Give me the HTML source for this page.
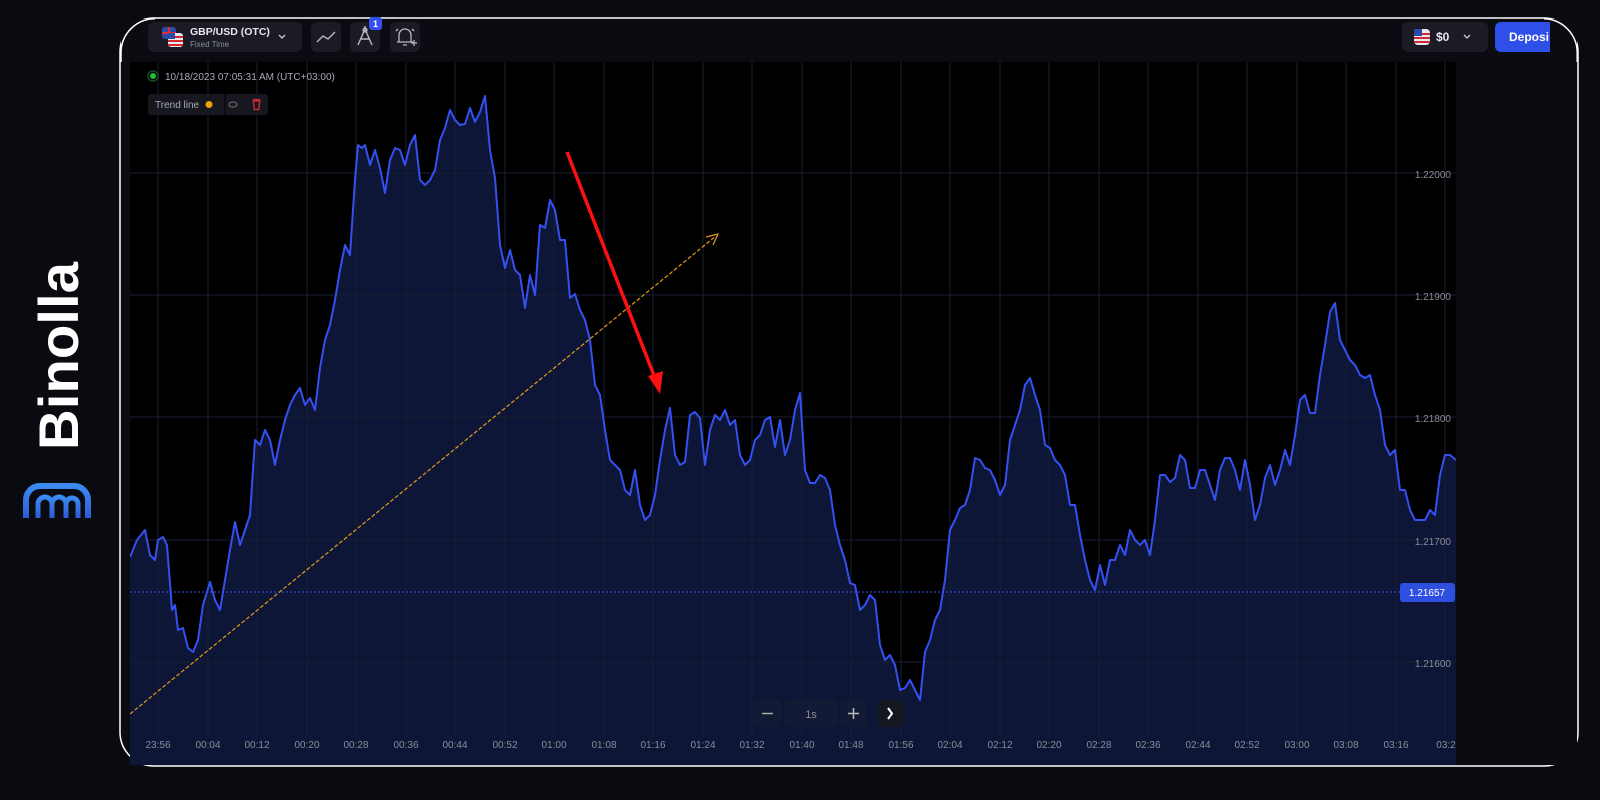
<!DOCTYPE html>
<html><head><meta charset="utf-8"><style>
html,body{margin:0;padding:0;width:1600px;height:800px;background:#0a0b10;overflow:hidden;font-family:"Liberation Sans",sans-serif}
</style></head><body>
<svg width="1600" height="800" viewBox="0 0 1600 800" xmlns="http://www.w3.org/2000/svg" style="position:absolute;left:0;top:0">
<defs><clipPath id="c"><rect x="130" y="62" width="1326" height="703"/></clipPath>
<linearGradient id="lg" x1="0" y1="1" x2="0" y2="0"><stop offset="0" stop-color="#2e5bd8"/><stop offset="1" stop-color="#3a8af0"/></linearGradient></defs>
<rect x="120" y="18" width="1458" height="748" rx="34" fill="#0b0c12" stroke="#ffffff" stroke-width="1.5"/>
<rect x="130" y="62" width="1326" height="703" fill="#000"/>
<g clip-path="url(#c)">
<polygon fill="#0d1636" points="130,765 130,557 137,540 145,530 150,555 155,560 158,540 163,537 167,545 172,610 175,605 178,630 183,628 188,648 193,652 198,640 203,605 210,582 215,600 220,610 225,580 230,550 235,522 240,545 245,530 250,515 255,440 260,445 265,430 270,440 275,465 280,440 285,420 290,405 295,395 300,388 305,405 310,398 315,410 320,368 325,340 330,325 335,300 340,270 345,245 350,255 355,180 358,145 362,148 365,145 370,165 375,150 380,168 385,193 390,160 395,148 400,150 405,165 410,145 415,135 420,180 425,185 430,180 435,170 440,140 445,128 450,110 455,120 460,125 465,124 470,108 475,122 480,112 485,96 490,150 495,178 500,245 505,268 510,250 515,270 520,275 525,308 530,275 535,295 540,225 545,228 550,200 555,210 560,240 565,240 570,298 575,294 580,310 585,320 590,340 595,385 600,395 605,430 610,460 615,465 620,470 625,490 630,495 635,470 640,505 645,520 650,515 655,495 660,460 665,430 670,408 675,455 680,465 685,462 690,415 695,412 700,418 705,465 710,430 715,415 720,420 725,410 730,425 735,420 740,455 745,465 750,460 755,440 760,435 765,420 770,417 775,447 780,420 785,455 790,440 795,410 800,393 805,470 810,483 815,483 820,475 825,478 830,490 835,525 840,545 845,560 850,583 855,585 860,610 865,605 870,595 875,600 880,645 885,660 890,655 895,665 900,690 905,688 910,680 915,690 920,700 925,652 930,640 935,620 940,610 945,580 950,530 955,520 960,508 965,505 970,490 975,458 980,460 985,468 990,470 995,480 1000,495 1005,485 1010,440 1015,425 1020,410 1025,385 1030,378 1035,395 1040,410 1045,445 1050,448 1055,460 1060,465 1065,475 1070,505 1075,505 1080,535 1085,560 1090,580 1095,590 1100,565 1105,585 1110,560 1115,560 1120,545 1125,555 1130,530 1135,540 1140,545 1145,540 1150,555 1155,520 1160,475 1165,475 1170,482 1175,478 1180,455 1185,460 1190,488 1195,488 1200,470 1205,470 1210,485 1215,500 1220,470 1225,458 1230,458 1235,470 1240,490 1245,460 1250,485 1255,520 1260,505 1265,478 1270,465 1275,485 1280,470 1285,450 1290,465 1295,435 1300,400 1305,395 1310,413 1315,413 1320,375 1325,345 1330,312 1335,303 1340,340 1345,350 1350,360 1355,365 1360,375 1365,378 1370,375 1375,395 1380,410 1385,445 1390,455 1395,450 1400,490 1405,490 1410,510 1415,520 1420,520 1425,520 1430,510 1435,515 1440,475 1445,455 1450,455 1456,460 1456,765"/>
<g stroke="#1a1f33" stroke-width="1">
<line x1="130" y1="173" x2="1456" y2="173"/><line x1="130" y1="295" x2="1456" y2="295"/><line x1="130" y1="417" x2="1456" y2="417"/><line x1="130" y1="540" x2="1456" y2="540"/><line x1="130" y1="662" x2="1456" y2="662"/>
<line x1="158" y1="62" x2="158" y2="737"/><line x1="208" y1="62" x2="208" y2="737"/><line x1="257" y1="62" x2="257" y2="737"/><line x1="307" y1="62" x2="307" y2="737"/><line x1="356" y1="62" x2="356" y2="737"/><line x1="406" y1="62" x2="406" y2="737"/><line x1="455" y1="62" x2="455" y2="737"/><line x1="505" y1="62" x2="505" y2="737"/><line x1="554" y1="62" x2="554" y2="737"/><line x1="604" y1="62" x2="604" y2="737"/><line x1="653" y1="62" x2="653" y2="737"/><line x1="703" y1="62" x2="703" y2="737"/><line x1="752" y1="62" x2="752" y2="737"/><line x1="802" y1="62" x2="802" y2="737"/><line x1="851" y1="62" x2="851" y2="737"/><line x1="901" y1="62" x2="901" y2="737"/><line x1="950" y1="62" x2="950" y2="737"/><line x1="1000" y1="62" x2="1000" y2="737"/><line x1="1049" y1="62" x2="1049" y2="737"/><line x1="1099" y1="62" x2="1099" y2="737"/><line x1="1148" y1="62" x2="1148" y2="737"/><line x1="1198" y1="62" x2="1198" y2="737"/><line x1="1247" y1="62" x2="1247" y2="737"/><line x1="1297" y1="62" x2="1297" y2="737"/><line x1="1346" y1="62" x2="1346" y2="737"/><line x1="1396" y1="62" x2="1396" y2="737"/><line x1="1445" y1="62" x2="1445" y2="737"/>
</g>
<polyline fill="none" stroke="#3550f0" stroke-width="2" stroke-linejoin="round" points="130,557 137,540 145,530 150,555 155,560 158,540 163,537 167,545 172,610 175,605 178,630 183,628 188,648 193,652 198,640 203,605 210,582 215,600 220,610 225,580 230,550 235,522 240,545 245,530 250,515 255,440 260,445 265,430 270,440 275,465 280,440 285,420 290,405 295,395 300,388 305,405 310,398 315,410 320,368 325,340 330,325 335,300 340,270 345,245 350,255 355,180 358,145 362,148 365,145 370,165 375,150 380,168 385,193 390,160 395,148 400,150 405,165 410,145 415,135 420,180 425,185 430,180 435,170 440,140 445,128 450,110 455,120 460,125 465,124 470,108 475,122 480,112 485,96 490,150 495,178 500,245 505,268 510,250 515,270 520,275 525,308 530,275 535,295 540,225 545,228 550,200 555,210 560,240 565,240 570,298 575,294 580,310 585,320 590,340 595,385 600,395 605,430 610,460 615,465 620,470 625,490 630,495 635,470 640,505 645,520 650,515 655,495 660,460 665,430 670,408 675,455 680,465 685,462 690,415 695,412 700,418 705,465 710,430 715,415 720,420 725,410 730,425 735,420 740,455 745,465 750,460 755,440 760,435 765,420 770,417 775,447 780,420 785,455 790,440 795,410 800,393 805,470 810,483 815,483 820,475 825,478 830,490 835,525 840,545 845,560 850,583 855,585 860,610 865,605 870,595 875,600 880,645 885,660 890,655 895,665 900,690 905,688 910,680 915,690 920,700 925,652 930,640 935,620 940,610 945,580 950,530 955,520 960,508 965,505 970,490 975,458 980,460 985,468 990,470 995,480 1000,495 1005,485 1010,440 1015,425 1020,410 1025,385 1030,378 1035,395 1040,410 1045,445 1050,448 1055,460 1060,465 1065,475 1070,505 1075,505 1080,535 1085,560 1090,580 1095,590 1100,565 1105,585 1110,560 1115,560 1120,545 1125,555 1130,530 1135,540 1140,545 1145,540 1150,555 1155,520 1160,475 1165,475 1170,482 1175,478 1180,455 1185,460 1190,488 1195,488 1200,470 1205,470 1210,485 1215,500 1220,470 1225,458 1230,458 1235,470 1240,490 1245,460 1250,485 1255,520 1260,505 1265,478 1270,465 1275,485 1280,470 1285,450 1290,465 1295,435 1300,400 1305,395 1310,413 1315,413 1320,375 1325,345 1330,312 1335,303 1340,340 1345,350 1350,360 1355,365 1360,375 1365,378 1370,375 1375,395 1380,410 1385,445 1390,455 1395,450 1400,490 1405,490 1410,510 1415,520 1420,520 1425,520 1430,510 1435,515 1440,475 1445,455 1450,455 1456,460"/>
<line x1="130" y1="592" x2="1400" y2="592" stroke="#3550f0" stroke-width="1" stroke-dasharray="2,2"/>
<line x1="130" y1="714" x2="716" y2="236" stroke="#e39a1a" stroke-width="1.2" stroke-dasharray="4,2"/>
<polyline points="706,237 718,234 713,245" fill="none" stroke="#e39a1a" stroke-width="1.2"/>
<line x1="567" y1="152" x2="655" y2="378" stroke="#ff1010" stroke-width="3.5"/>
<polygon points="660,394 648,376 663,371" fill="#ff1010"/>
</g>
<rect x="121" y="19" width="1456" height="43" fill="#0b0c12"/>
<path d="M121 62 V52 A34 34 0 0 1 155 18.8" fill="none" stroke="#fff" stroke-width="1.5"/>
<path d="M1544 18.8 A34 34 0 0 1 1577.2 52 V62" fill="none" stroke="#fff" stroke-width="1.5"/>
<rect x="1456" y="62" width="121" height="703" fill="#0b0c12"/>
<rect x="148" y="22" width="154" height="30" rx="6" fill="#1a1b25"/>
<rect x="162" y="27" width="14" height="12" rx="3" fill="#2c4aa6"/><line x1="162" y1="33" x2="176" y2="33" stroke="#e02d3c" stroke-width="2"/><line x1="169" y1="27" x2="169" y2="39" stroke="#e02d3c" stroke-width="2"/>
<rect x="168" y="33" width="15" height="14" rx="3" fill="#e8e8ee"/><rect x="168" y="36" width="15" height="2" fill="#d02a35"/><rect x="168" y="40" width="15" height="2" fill="#d02a35"/><rect x="168" y="44" width="15" height="2" fill="#d02a35"/><rect x="168" y="33" width="7" height="6" fill="#2c4aa6"/>
<text x="190" y="35" font-size="10.5" font-weight="bold" fill="#e6e7ee">GBP/USD (OTC)</text>
<text x="190" y="47" font-size="8" fill="#8a8c98">Fixed Time</text>
<polyline points="279,35 282,38 285,35" fill="none" stroke="#ccc" stroke-width="1.3"/>
<rect x="311" y="22" width="30" height="30" rx="6" fill="#1a1b25"/>
<polyline points="317,42 323,36 328,39 335,32" fill="none" stroke="#bbb" stroke-width="1.4"/>
<rect x="350" y="22" width="30" height="30" rx="6" fill="#1a1b25"/>
<path d="M365 29 L358 45 M365 29 L372 45 M360 39 H370 M365 26 v3" fill="none" stroke="#bbb" stroke-width="1.4"/><circle cx="365" cy="30" r="2" fill="none" stroke="#bbb" stroke-width="1.3"/>
<rect x="369" y="17" width="13" height="13" rx="3" fill="#3550f0"/><text x="375.5" y="27" font-size="9" font-weight="bold" fill="#fff" text-anchor="middle">1</text>
<rect x="390" y="22" width="30" height="30" rx="6" fill="#1a1b25"/>
<path d="M399 42 V35 A6 6 0 0 1 411 35 V42 Z M397 42 H413 M403 45 H407 M396 31 L398 29 M414 31 L412 29" fill="none" stroke="#bbb" stroke-width="1.3"/><path d="M411 43 h6 M414 40 v6" stroke="#bbb" stroke-width="1.3"/>
<rect x="1402" y="22" width="86" height="30" rx="6" fill="#1a1b25"/>
<rect x="1414" y="29" width="16" height="16" rx="4" fill="#e8e8ee"/><rect x="1414" y="33" width="16" height="2" fill="#d02a35"/><rect x="1414" y="37" width="16" height="2" fill="#d02a35"/><rect x="1414" y="41" width="16" height="2" fill="#d02a35"/><rect x="1414" y="29" width="8" height="7" fill="#2c4aa6"/>
<text x="1436" y="41" font-size="12" font-weight="bold" fill="#e6e7ee">$0</text>
<polyline points="1464,35 1467,38 1470,35" fill="none" stroke="#ccc" stroke-width="1.3"/>
<path d="M1501 22 H1550 V52 H1501 A6 6 0 0 1 1495 46 V28 A6 6 0 0 1 1501 22Z" fill="#2f50e8"/>
<text x="1509" y="41" font-size="12" font-weight="bold" fill="#fff">Deposi</text>
<circle cx="153" cy="76" r="3" fill="#1ec23a"/><circle cx="153" cy="76" r="5" fill="none" stroke="#1a4a22" stroke-width="1.5"/>
<text x="165" y="80" font-size="10" fill="#a8aab5">10/18/2023  07:05:31 AM  (UTC+03:00)</text>
<rect x="148" y="94" width="120" height="21" rx="3" fill="#17181f"/>
<line x1="225" y1="94" x2="225" y2="115" stroke="#000" stroke-width="1"/>
<text x="155" y="108" font-size="10" fill="#a8aab5">Trend line</text>
<circle cx="209" cy="104.5" r="3.5" fill="#f4a00b"/>
<ellipse cx="233" cy="104.5" rx="4" ry="2.5" fill="none" stroke="#666" stroke-width="1.2"/>
<path d="M252 101 h9 M254 101 v-1.5 h5 v1.5 M253.5 102 l0.8 7.5 h4.4 l0.8 -7.5" fill="none" stroke="#d9303a" stroke-width="1.3"/>
<g font-size="10" fill="#8a8c98" text-anchor="end">
<text x="1451" y="178">1.22000</text><text x="1451" y="300">1.21900</text><text x="1451" y="422">1.21800</text><text x="1451" y="545">1.21700</text><text x="1451" y="667">1.21600</text>
</g>
<rect x="1400" y="583" width="55" height="19" rx="3" fill="#2f4fe0"/>
<text x="1427" y="596" font-size="10" fill="#fff" text-anchor="middle">1.21657</text>
<g font-size="10" fill="#8a8c98" text-anchor="middle">
<text x="158" y="748">23:56</text><text x="208" y="748">00:04</text><text x="257" y="748">00:12</text><text x="307" y="748">00:20</text><text x="356" y="748">00:28</text><text x="406" y="748">00:36</text><text x="455" y="748">00:44</text><text x="505" y="748">00:52</text><text x="554" y="748">01:00</text><text x="604" y="748">01:08</text><text x="653" y="748">01:16</text><text x="703" y="748">01:24</text><text x="752" y="748">01:32</text><text x="802" y="748">01:40</text><text x="851" y="748">01:48</text><text x="901" y="748">01:56</text><text x="950" y="748">02:04</text><text x="1000" y="748">02:12</text><text x="1049" y="748">02:20</text><text x="1099" y="748">02:28</text><text x="1148" y="748">02:36</text><text x="1198" y="748">02:44</text><text x="1247" y="748">02:52</text><text x="1297" y="748">03:00</text><text x="1346" y="748">03:08</text><text x="1396" y="748">03:16</text><text x="1446" y="748">03:2</text>
</g>
<rect x="1456" y="735" width="20" height="20" fill="#0b0c12"/>
<rect x="754" y="700" width="27" height="27" rx="4" fill="#131a35"/>
<rect x="784" y="700" width="54" height="27" rx="4" fill="#131a35"/>
<rect x="840" y="700" width="27" height="27" rx="4" fill="#131a35"/>
<rect x="878" y="700" width="26" height="27" rx="5" fill="#15171f"/>
<line x1="762" y1="713.5" x2="773" y2="713.5" stroke="#aaa" stroke-width="1.5"/>
<text x="811" y="718" font-size="11" fill="#8a8c98" text-anchor="middle">1s</text>
<path d="M848 713.5 h11 M853.5 708 v11" stroke="#bbb" stroke-width="1.5"/>
<polyline points="888,708 892,713.5 888,719" fill="none" stroke="#fff" stroke-width="2"/>
<text transform="translate(78,356) rotate(-90)" font-size="56" font-weight="bold" fill="#ffffff" text-anchor="middle" textLength="188" lengthAdjust="spacingAndGlyphs" font-family="Liberation Sans, sans-serif">Binolla</text>
<path d="M26 518 V500 A14 14 0 0 1 40 486 H74 A14 14 0 0 1 88 500 V518" fill="none" stroke="url(#lg)" stroke-width="6"/>
<path d="M38 518 V504 A7 7 0 0 1 52 504 V518 M52 504 A7 7 0 0 1 66 504 V518 M66 504 A6 6 0 0 1 78 504 V518" fill="none" stroke="url(#lg)" stroke-width="5"/>
</svg>
</body></html>
